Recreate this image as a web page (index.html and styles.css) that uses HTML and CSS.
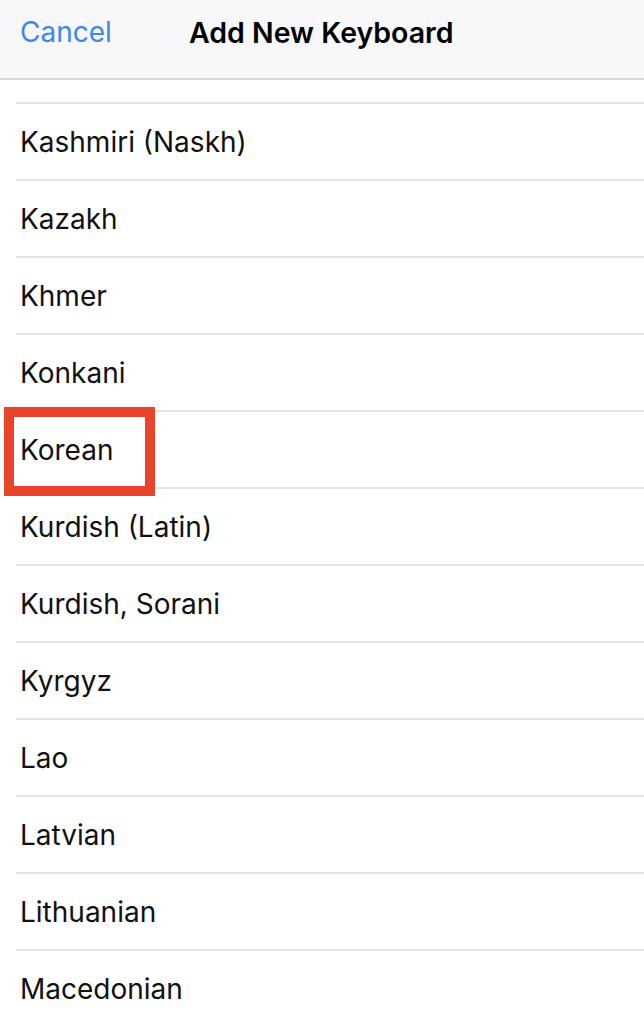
FILE: index.html
```html
<!DOCTYPE html>
<html>
<head>
<meta charset="utf-8">
<link rel="stylesheet" href="styles.css">
</head>
<body>
<header class="navbar">
  <span class="cancel">Cancel</span>
  <span class="title">Add New Keyboard</span>
</header>
<div class="list">
  <div class="top-gap"></div>
  <div class="row">Kashmiri (Naskh)</div>
  <div class="row">Kazakh</div>
  <div class="row">Khmer</div>
  <div class="row">Konkani</div>
  <div class="row highlighted">Korean<span class="mark"></span></div>
  <div class="row">Kurdish (Latin)</div>
  <div class="row">Kurdish, Sorani</div>
  <div class="row">Kyrgyz</div>
  <div class="row">Lao</div>
  <div class="row">Latvian</div>
  <div class="row">Lithuanian</div>
  <div class="row">Macedonian</div>
</div>
</body>
</html>
```
FILE: styles.css
```css
html, body {
  margin: 0;
  padding: 0;
  background: #ffffff;
}
body {
  font-family: Inter, "Noto Sans", sans-serif;
  width: 644px;
  height: 1024px;
  overflow: hidden;
}
.navbar {
  height: 80px;
  box-sizing: border-box;
  background: #f8f7fa;
  border-bottom: 2px solid #d7d7d9;
  display: flex;
  align-items: flex-start;
  padding: 15px 0 0 20px;
  font-size: 28px;
}
.cancel {
  color: #3a87f6;
  width: 169px;
}
.title {
  color: #000;
  font-weight: 600;
  font-size: 28.5px;
}
.list {
  display: flex;
  flex-direction: column;
}
.top-gap {
  height: 22px;
}
.row {
  position: relative;
  height: 77px;
  box-sizing: border-box;
  border-top: 2px solid #e4e4e6;
  margin-left: 16px;
  padding-left: 4px;
  display: flex;
  align-items: center;
  font-size: 28px;
  font-weight: 400;
  color: #111;
}
.mark {
  position: absolute;
  z-index: 2;
  left: -12px;
  top: -5px;
  width: 151px;
  height: 89px;
  box-sizing: border-box;
  border: 10px solid #e8442c;
}
```
